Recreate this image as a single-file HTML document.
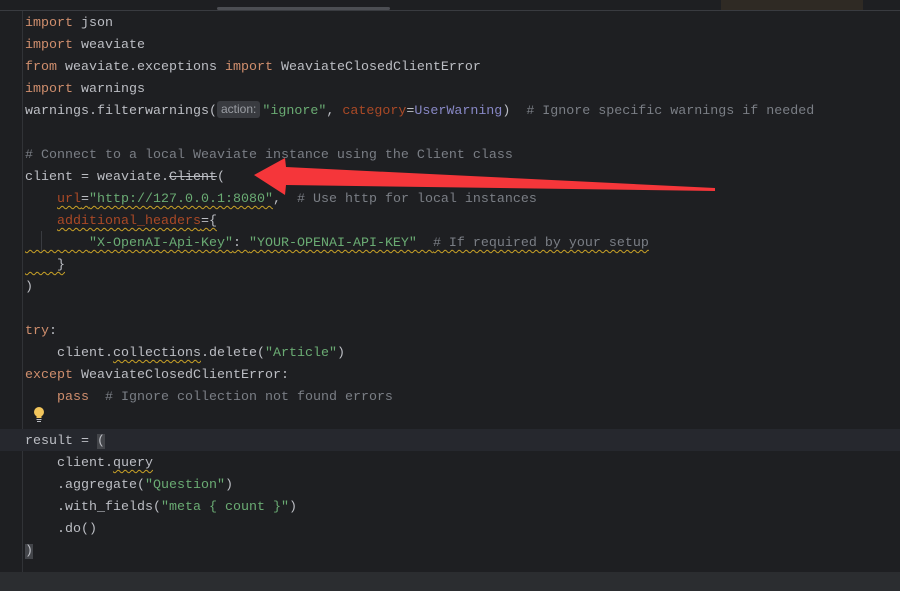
<!DOCTYPE html>
<html><head><meta charset="utf-8"><style>
body{margin:0;width:900px;height:591px;background:#1e1f22;overflow:hidden;position:relative;font-family:"Liberation Mono",monospace;font-size:13.33px;color:#bcbec4}
.l{position:absolute;left:25px;height:22px;line-height:22px;white-space:pre;margin-top:2px}
.k{color:#cf8e6d}.s{color:#6aab73}.c{color:#7a7e85}.p{color:#aa4926}.u{color:#8888c6}
.w{text-decoration:underline wavy #c9a227;text-decoration-thickness:1px;text-underline-offset:3px}
.hint{display:inline-block;line-height:17px;background:#393b40;color:#9a9da3;font-family:"Liberation Sans",sans-serif;font-size:12px;border-radius:3px;padding:0 4px;margin-right:2px;vertical-align:1px}
.st{text-decoration:line-through}
</style></head><body>
<div style="position:absolute;left:0;top:0;width:900px;height:10px;background:#1e1f22"></div>
<div style="position:absolute;left:721px;top:0;width:142px;height:10px;background:#2f2a24"></div>
<div style="position:absolute;left:217px;top:7px;width:173px;height:3px;background:#4c4e53;border-radius:2px"></div>
<div style="position:absolute;left:0;top:10px;width:900px;height:1px;background:#393b40"></div>
<div style="position:absolute;left:22px;top:11px;width:1px;height:561px;background:#313337"></div>
<div style="position:absolute;left:0;top:429px;width:900px;height:22px;background:#26282e"></div>
<div style="position:absolute;left:0;top:572px;width:900px;height:19px;background:#2b2d30"></div>
<div style="position:absolute;left:41px;top:231px;width:1px;height:22px;background:#393b40"></div>
<div class="l" style="top:11px"><span class="k">import</span> json</div>
<div class="l" style="top:33px"><span class="k">import</span> weaviate</div>
<div class="l" style="top:55px"><span class="k">from</span> weaviate.exceptions <span class="k">import</span> WeaviateClosedClientError</div>
<div class="l" style="top:77px"><span class="k">import</span> warnings</div>
<div class="l" style="top:99px">warnings.filterwarnings(<span class="hint">action:</span><span class="s">"ignore"</span>, <span class="p">category</span>=<span class="u">UserWarning</span>)  <span class="c"># Ignore specific warnings if needed</span></div>
<div class="l" style="top:143px"><span class="c"># Connect to a local Weaviate instance using the Client class</span></div>
<div class="l" style="top:165px">client = weaviate.<span class="st">Client</span>(</div>
<div class="l" style="top:187px">    <span class="w"><span class="p">url</span>=<span class="s">"http://127.0.0.1:8080"</span></span>,  <span class="c"># Use http for local instances</span></div>
<div class="l" style="top:209px">    <span class="w"><span class="p">additional_headers</span>={</span></div>
<div class="l" style="top:231px"><span class="w">        <span class="s">"X-OpenAI-Api-Key"</span>: <span class="s">"YOUR-OPENAI-API-KEY"</span>  <span class="c"># If required by your setup</span></span></div>
<div class="l" style="top:253px"><span class="w">    }</span></div>
<div class="l" style="top:275px">)</div>
<div class="l" style="top:319px"><span class="k">try</span>:</div>
<div class="l" style="top:341px">    client.<span class="w">collections</span>.delete(<span class="s">"Article"</span>)</div>
<div class="l" style="top:363px"><span class="k">except</span> WeaviateClosedClientError:</div>
<div class="l" style="top:385px">    <span class="k">pass</span>  <span class="c"># Ignore collection not found errors</span></div>
<svg style="position:absolute;left:32px;top:406px" width="14" height="18" viewBox="0 0 14 18"><circle cx="7" cy="6" r="5" fill="#f2c55c"/><rect x="4.5" y="9" width="5" height="3" fill="#f2c55c"/><rect x="4.5" y="13" width="5" height="1" fill="#bcbec4"/><rect x="5" y="15" width="4" height="1" fill="#bcbec4"/></svg>
<div class="l" style="top:429px;margin-top:0;padding-top:2px;height:20px">result = <span style="background:#43454a">(</span></div>
<div class="l" style="top:451px">    client.<span class="w">query</span></div>
<div class="l" style="top:473px">    .aggregate(<span class="s">"Question"</span>)</div>
<div class="l" style="top:495px">    .with_fields(<span class="s">"meta { count }"</span>)</div>
<div class="l" style="top:517px">    .do()</div>
<div class="l" style="top:539px"><span style="background:#43454a">)</span></div>
<svg style="position:absolute;left:0;top:0" width="900" height="591"><polygon points="254,175 285,158 286,167 715,188 715,191 286,185 285,195" fill="#f5363a"/></svg>
</body></html>
